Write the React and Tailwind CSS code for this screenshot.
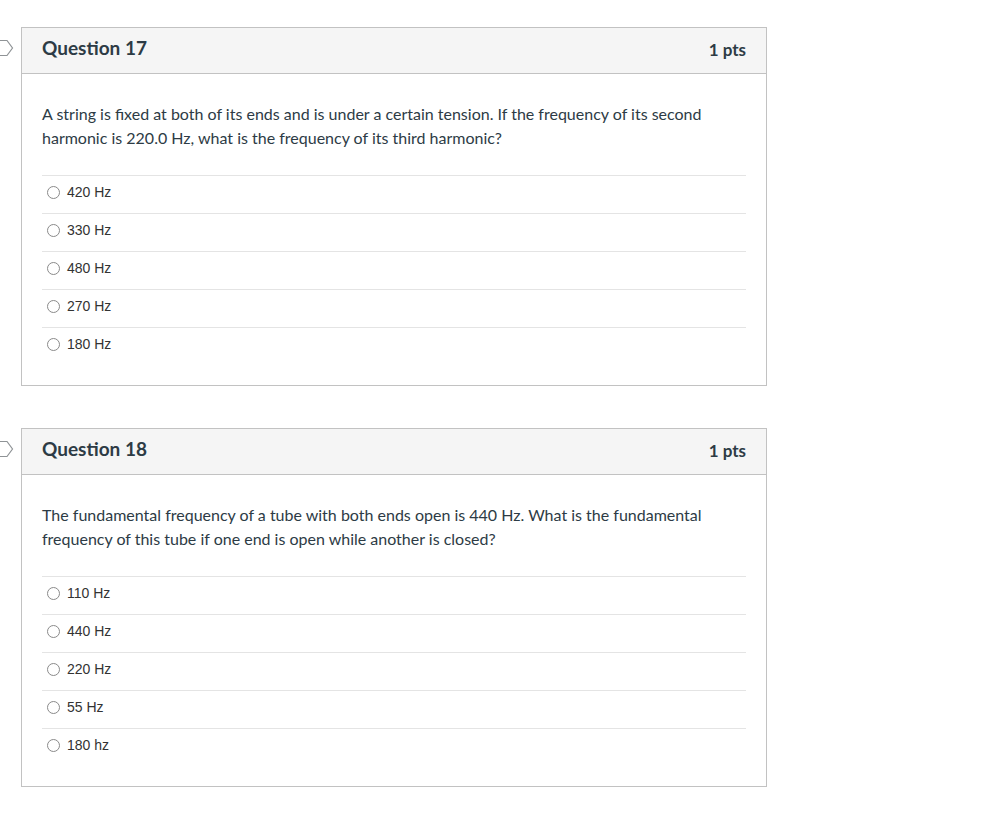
import React from 'react';

const QUESTIONS = [
  {
    title: 'Question 17',
    text: 'A string is fixed at both of its ends and is under a certain tension. If the frequency of its second harmonic is 220.0 Hz, what is the frequency of its third harmonic?',
    answers: ['420 Hz', '330 Hz', '480 Hz', '270 Hz', '180 Hz'],
  },
  {
    title: 'Question 18',
    text: 'The fundamental frequency of a tube with both ends open is 440 Hz. What is the fundamental frequency of this tube if one end is open while another is closed?',
    answers: ['110 Hz', '440 Hz', '220 Hz', '55 Hz', '180 hz'],
  },
];

function Marker() {
  return (
    <svg width="14" height="18" viewBox="0 0 14 18" className="shrink-0">
      <path d="M-2 1.5 H7 L12.5 9 L7 16.5 H-2" fill="white" stroke="#8f9396" strokeWidth="1.2" />
    </svg>
  );
}

function Question({ q }) {
  return (
    <div className="flex items-start">
      <div className="w-[21px] pt-[12px]">
        <Marker />
      </div>
      <div className="w-[746px] border border-[#c2c2c2] bg-white">
        <div className="h-[46px] bg-[#f5f5f5] border-b border-[#c2c2c2] flex items-center justify-between px-[20px]">
          <span className="text-[19px] font-bold text-[#2d3b45] pb-[4px]">{q.title}</span>
          <span className="text-[17px] font-bold text-[#2d3b45] pb-[1px]">1 pts</span>
        </div>
        <div className="px-[20px] pt-[28px] pb-[20px]">
          <p className="text-[16px] leading-[24px] text-[#2d3b45]">{q.text}</p>
          <div className="mt-[25px]">
            {q.answers.map((a) => (
              <div key={a} className="h-[38px] border-t border-[#e4e4e4] flex items-center pl-[5px] pb-[4px]">
                <span className="w-[13px] h-[13px] rounded-full border border-[#8a8a8a] bg-white" />
                <span className="ml-[7px] text-[14px] text-[#333] font-['Liberation_Sans',Arial,sans-serif]">{a}</span>
              </div>
            ))}
          </div>
        </div>
      </div>
    </div>
  );
}

export default function App() {
  return (
    <div className="min-h-[817px] bg-white pt-[27px] font-['Lato','Noto_Sans',sans-serif] flex flex-col gap-[42px]">
      {QUESTIONS.map((q) => (
        <Question key={q.title} q={q} />
      ))}
    </div>
  );
}
